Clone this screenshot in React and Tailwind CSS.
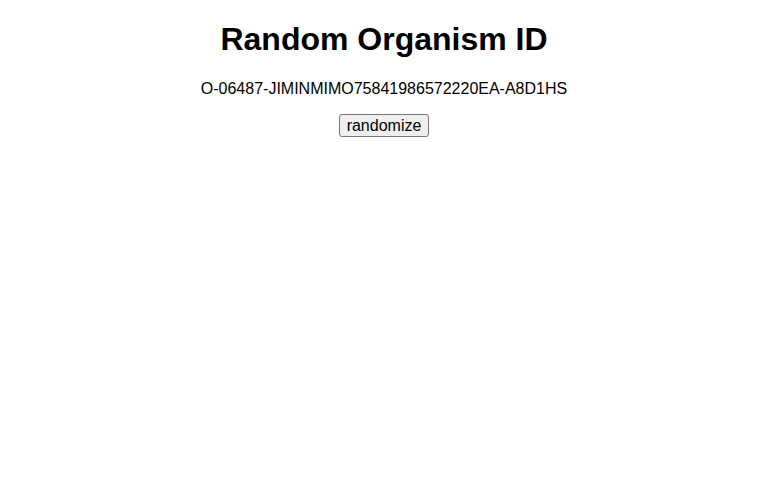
import React, { useState } from "react";

const CHARS = "ABCDEFGHIJKLMNOPQRSTUVWXYZ0123456789";

const makeId = () => {
  const pick = (n, set) =>
    Array.from({ length: n }, () => set[Math.floor(Math.random() * set.length)]).join("");
  return `O-${pick(5, "0123456789")}-${pick(25, CHARS)}-${pick(6, CHARS)}`;
};

export default function App() {
  const [id, setId] = useState("O-06487-JIMINMIMO75841986572220EA-A8D1HS");

  return (
    <div className="min-h-screen bg-white text-black text-center font-['Liberation_Sans',Arial,sans-serif]">
      <h1 className="pt-[21px] pb-[22px] text-[32px] leading-[37px] font-bold">Random Organism ID</h1>
      <p className="text-base leading-[18px]">{id}</p>
      <div className="pt-4">
        <button
          onClick={() => setId(makeId())}
          className="px-[7px] py-[1px] text-base leading-[19px] bg-[#efefef] border border-[#767676] rounded-[3px] hover:bg-[#e5e5e5]"
        >
          randomize
        </button>
      </div>
    </div>
  );
}
